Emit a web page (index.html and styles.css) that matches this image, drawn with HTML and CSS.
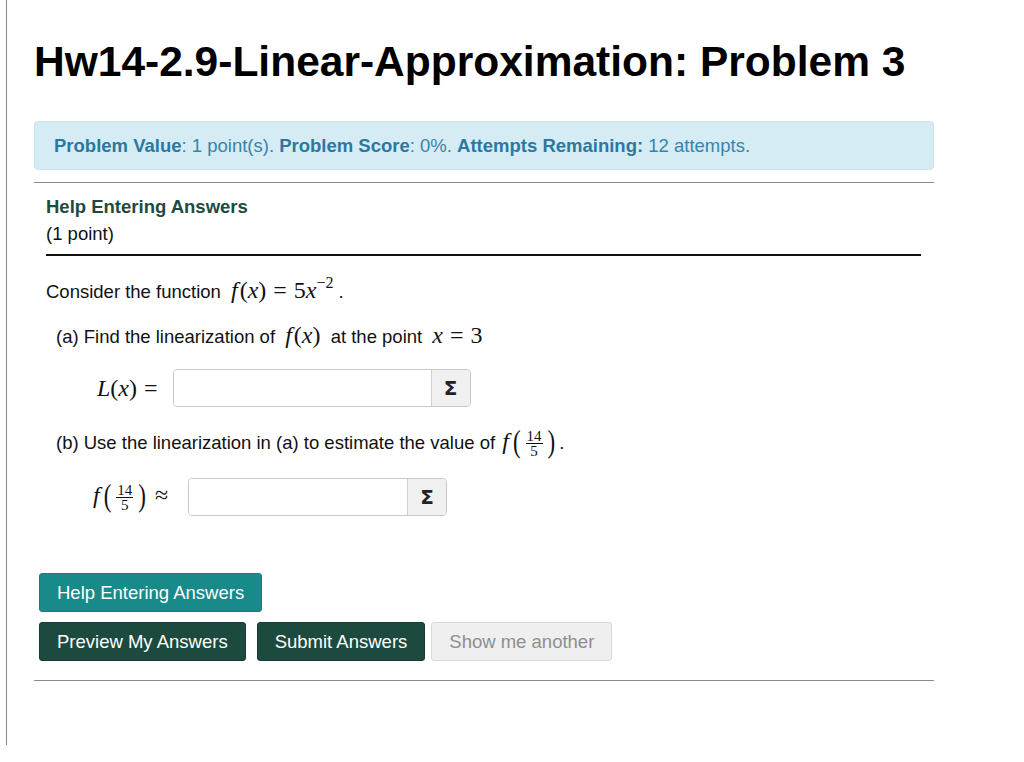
FILE: index.html
```html
<!DOCTYPE html>
<html>
<head>
<meta charset="utf-8">
<link rel="stylesheet" href="styles.css">
</head>
<body>
<div class="frame">
  <div class="sideline"></div>
  <main class="content">
    <h1 class="title">Hw14-2.9-Linear-Approximation: Problem 3</h1>
    <div class="info">
      <b>Problem Value</b>: 1 point(s). <b>Problem Score</b>: 0%. <b>Attempts Remaining:</b> 12 attempts.
    </div>
    <hr class="rule">
    <div class="problem">
      <div class="phead">
        <div class="help">Help Entering Answers</div>
        <div class="pts">(1 point)</div>
      </div>
      <p class="line consider">Consider the function <span class="m"><i class="fi">f</i>(<i>x</i>)<span class="rel">=</span>5<i>x</i><sup>−2</sup></span>.</p>
      <p class="line part">(a) Find the linearization of <span class="m"><i class="fi">f</i>(<i>x</i>)</span> at the point <span class="m"><i>x</i><span class="rel">=</span>3</span></p>
      <div class="ans ans-a">
        <span class="m lbl"><i>L</i>(<i>x</i>)<span class="rel r-end">=</span></span>
        <div class="field w1"><div class="inp"></div><div class="sig">Σ</div></div>
      </div>
      <p class="line part">(b) Use the linearization in (a) to estimate the value of <span class="m mb"><i class="fi">f</i><span class="paren">(</span><span class="frac"><span class="num">14</span><span class="den">5</span></span><span class="paren">)</span></span>.</p>
      <div class="ans ans-b">
        <span class="m lbl"><i class="fi">f</i><span class="paren">(</span><span class="frac"><span class="num">14</span><span class="den">5</span></span><span class="paren">)</span><span class="rel r-end">≈</span></span>
        <div class="field w2"><div class="inp"></div><div class="sig">Σ</div></div>
      </div>
    </div>
    <div class="buttons">
      <div class="row"><span class="btn teal">Help Entering Answers</span></div>
      <div class="row">
        <span class="btn dark">Preview My Answers</span>
        <span class="btn dark sub">Submit Answers</span>
        <span class="btn light">Show me another</span>
      </div>
    </div>
    <hr class="rule bottom">
  </main>
</div>
</body>
</html>
```
FILE: styles.css
```css
html, body {
  margin: 0;
  padding: 0;
  background: #fff;
}
body {
  font-family: "Liberation Sans", Arial, sans-serif;
  color: #111;
  width: 1024px;
  height: 762px;
  overflow: hidden;
}
.frame {
  display: flex;
  height: 762px;
}
.sideline {
  width: 1px;
  height: 745px;
  margin-left: 6px;
  background: #8a8a8a;
}
.content {
  width: 900px;
  margin-left: 27px;
}
.title {
  font-size: 42.5px;
  font-weight: bold;
  margin: 38px 0 0 0;
  line-height: 48px;
  color: #000;
}
.info {
  margin-top: 35px;
  height: 49px;
  box-sizing: border-box;
  border: 1px solid #c4e6ef;
  background: #d6ecf5;
  border-radius: 4px;
  padding: 0 19px;
  line-height: 47px;
  font-size: 18.5px;
  color: #3584ab;
}
.info b { color: #2c78a0; }
.rule {
  border: 0;
  border-top: 1px solid #8c8c8c;
  margin: 12px 0 0 0;
}
.problem {
  padding: 0 13px 0 12px;
}
.phead {
  padding-top: 11px;
  padding-bottom: 7px;
  border-bottom: 2px solid #111;
}
.help {
  color: #1d4b3e;
  font-weight: bold;
  font-size: 18.5px;
  line-height: 26px;
  height: 26px;
}
.pts {
  font-size: 18.5px;
  line-height: 26px;
  height: 26px;
  margin-top: 1px;
}
.line {
  margin: 0;
  font-size: 18.5px;
  line-height: 26px;
  height: 26px;
  white-space: nowrap;
}
.consider { margin-top: 22px; }
.part { margin-left: 10px; margin-top: 19px; }
.ans + .part { margin-top: 22px; }
.m {
  font-family: "Liberation Serif", "Times New Roman", serif;
  font-size: 24px;
  line-height: 1;
  padding: 0 5px;
}
.mb { padding-left: 2px; padding-right: 2px; }
.fi { margin-right: 2px; }
.rel { margin: 0 7px; }
.r-end { margin-right: 0; }
.m sup { font-size: 16px; vertical-align: 10px; line-height: 0; }
.ans {
  display: flex;
  align-items: center;
  height: 38px;
}
.ans-a { margin-left: 51px; margin-top: 20px; }
.ans-b { margin-left: 47px; margin-top: 23px; }
.lbl { padding: 0; }
.ans-a .lbl { margin-right: 15px; }
.ans-b .lbl { margin-right: 20px; }
.field {
  display: flex;
  height: 38px;
  box-sizing: border-box;
  border: 1px solid #c8c8c8;
  border-radius: 4px;
  box-shadow: inset 0 1px 1px rgba(0,0,0,0.08);
  overflow: hidden;
}
.w1 { width: 298px; }
.w2 { width: 259px; }
.inp { flex: 1; background: #fff; }
.sig {
  width: 38px;
  border-left: 1px solid #cfcfcf;
  background: #f0f0f0;
  display: flex;
  align-items: center;
  justify-content: center;
  font-family: "DejaVu Sans", sans-serif;
  font-weight: bold;
  font-size: 20px;
  color: #222;
}
.frac {
  display: inline-block;
  vertical-align: middle;
  text-align: center;
  font-size: 15px;
  line-height: 14px;
  margin: 0 3px;
}
.num, .den { display: block; padding: 0 1px; }
.num { border-bottom: 1px solid #111; }
.paren {
  display: inline-block;
  font-size: 23px;
  transform: scaleY(1.35);
  margin: 0 2px;
}
.buttons {
  margin-top: 57px;
  padding-left: 5px;
}
.row {
  display: flex;
  margin-bottom: 10px;
}
.btn {
  display: inline-block;
  box-sizing: border-box;
  height: 39px;
  line-height: 37px;
  font-size: 18.5px;
  padding: 0 17px;
  border-radius: 3px;
  border: 1px solid transparent;
}
.teal { background: #178a89; color: #fff; border-color: #13807f; }
.dark { background: #1c4a3f; color: #fff; border-color: #163d33; }
.sub { margin-left: 11px; }
.light { margin-left: 6px; background: #efefef; color: #8e8e8e; border-color: #d8d8d8; }
.bottom { margin-top: 19px; }
```
